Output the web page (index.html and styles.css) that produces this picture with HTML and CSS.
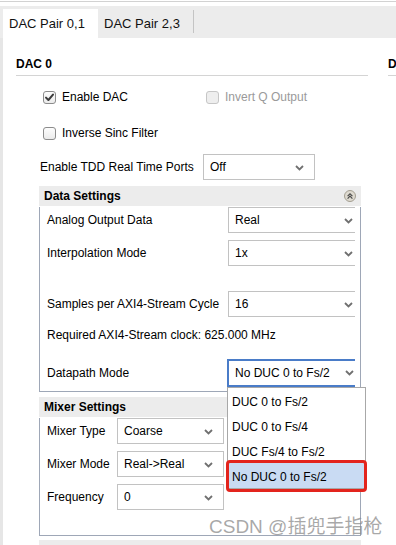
FILE: index.html
```html
<!DOCTYPE html>
<html>
<head>
<meta charset="utf-8">
<link rel="stylesheet" href="styles.css">
</head>
<body>
<div class="app">
  <div class="topline"></div>
  <div class="tabbar">
    <div class="tab active">DAC Pair 0,1</div>
    <div class="tab">DAC Pair 2,3</div>
    <div class="tab-sep"></div>
  </div>
  <div class="content">
    <div class="columns">
      <div class="col">
        <div class="heading">DAC 0</div>

        <div class="check-row r1">
          <div class="check-item wide">
            <span class="cb"><svg width="11" height="11" viewBox="0 0 11 11"><path d="M2 5.6 L4.4 8 L9 2.6" fill="none" stroke="#3c3c3c" stroke-width="2" stroke-linecap="round" stroke-linejoin="round"/></svg></span>
            <span>Enable DAC</span>
          </div>
          <div class="check-item disabled">
            <span class="cb"></span>
            <span>Invert Q Output</span>
          </div>
        </div>

        <div class="check-row r2">
          <div class="check-item">
            <span class="cb"></span>
            <span>Inverse Sinc Filter</span>
          </div>
        </div>

        <div class="tdd-row">
          <span class="tdd-lbl">Enable TDD Real Time Ports</span>
          <div class="select w-off">Off<svg class="chev" width="9" height="6" viewBox="0 0 9 6"><polyline points="1,1 4.5,4.5 8,1" fill="none" stroke="#707070" stroke-width="1.8"/></svg></div>
        </div>

        <div class="panel data">
          <div class="panel-head">
            <span>Data Settings</span>
            <svg class="collapse" width="12" height="12" viewBox="0 0 12 12"><circle cx="6" cy="6" r="5.5" fill="#dedad0" stroke="#a39e91"/><polyline points="3.6,6.2 6,3.8 8.4,6.2" fill="none" stroke="#4a4a4a" stroke-width="1.2"/><polyline points="3.6,8.6 6,6.2 8.4,8.6" fill="none" stroke="#4a4a4a" stroke-width="1.2"/></svg>
          </div>
          <div class="panel-body">
            <div class="frow ra">
              <span class="lbl">Analog Output Data</span>
              <div class="select w-data clip">Real<svg class="chev" width="9" height="6" viewBox="0 0 9 6"><polyline points="1,1 4.5,4.5 8,1" fill="none" stroke="#707070" stroke-width="1.8"/></svg></div>
            </div>
            <div class="frow rb">
              <span class="lbl">Interpolation Mode</span>
              <div class="select w-data clip">1x<svg class="chev" width="9" height="6" viewBox="0 0 9 6"><polyline points="1,1 4.5,4.5 8,1" fill="none" stroke="#707070" stroke-width="1.8"/></svg></div>
            </div>
            <div class="frow rc">
              <span class="lbl">Samples per AXI4-Stream Cycle</span>
              <div class="select w-data clip">16<svg class="chev" width="9" height="6" viewBox="0 0 9 6"><polyline points="1,1 4.5,4.5 8,1" fill="none" stroke="#707070" stroke-width="1.8"/></svg></div>
            </div>
            <div class="info">Required AXI4-Stream clock: 625.000 MHz</div>
            <div class="frow re">
              <span class="lbl">Datapath Mode</span>
              <div class="sel-wrap">
                <div class="select focused">No DUC 0 to Fs/2<svg class="chev" width="9" height="6" viewBox="0 0 9 6"><polyline points="1,1 4.5,4.5 8,1" fill="none" stroke="#707070" stroke-width="1.8"/></svg></div>
                <div class="popup">
                  <div class="opt">DUC 0 to Fs/2</div>
                  <div class="opt">DUC 0 to Fs/4</div>
                  <div class="opt">DUC Fs/4 to Fs/2</div>
                  <div class="opt selected">No DUC 0 to Fs/2</div>
                </div>
              </div>
            </div>
          </div>
        </div>

        <div class="panel mixer">
          <div class="panel-head">
            <span>Mixer Settings</span>
            <svg class="collapse" width="12" height="12" viewBox="0 0 12 12"><circle cx="6" cy="6" r="5.5" fill="#dedad0" stroke="#a39e91"/><polyline points="3.6,6.2 6,3.8 8.4,6.2" fill="none" stroke="#4a4a4a" stroke-width="1.2"/><polyline points="3.6,8.6 6,6.2 8.4,8.6" fill="none" stroke="#4a4a4a" stroke-width="1.2"/></svg>
          </div>
          <div class="panel-body">
            <div class="mrow m1">
              <span class="mlbl">Mixer Type</span>
              <div class="select w-mix">Coarse<svg class="chev" width="9" height="6" viewBox="0 0 9 6"><polyline points="1,1 4.5,4.5 8,1" fill="none" stroke="#707070" stroke-width="1.8"/></svg></div>
            </div>
            <div class="mrow m2">
              <span class="mlbl">Mixer Mode</span>
              <div class="select w-mix">Real-&gt;Real<svg class="chev" width="9" height="6" viewBox="0 0 9 6"><polyline points="1,1 4.5,4.5 8,1" fill="none" stroke="#707070" stroke-width="1.8"/></svg></div>
            </div>
            <div class="mrow m3">
              <span class="mlbl">Frequency</span>
              <div class="select w-mix">0<svg class="chev" width="9" height="6" viewBox="0 0 9 6"><polyline points="1,1 4.5,4.5 8,1" fill="none" stroke="#707070" stroke-width="1.8"/></svg></div>
            </div>
          </div>
        </div>

        <div class="panel next">
          <div class="panel-head"></div>
        </div>
      </div>

      <div class="col">
        <div class="heading">DAC 1</div>
      </div>
    </div>
  </div>
  <div class="watermark">CSDN @插兜手指枪</div>
</div>
</body>
</html>
```

FILE: styles.css
```css
html, body {
  margin: 0;
  padding: 0;
  width: 396px;
  height: 545px;
  overflow: hidden;
  background: #fff;
}

body {
  font-family: "Liberation Sans", Arial, sans-serif;
  font-size: 12px;
  color: #000;
}

.app {
  position: relative;
  width: 396px;
  height: 545px;
  overflow: hidden;
}

.topline {
  height: 1px;
  margin-top: 1px;
  background: #d2d2d2;
}

.tabbar {
  margin-top: 4px;
  height: 32px;
  background: #ececec;
  display: flex;
  align-items: flex-end;
  padding-left: 3px;
}

.tab {
  width: 89px;
  padding-left: 6px;
  height: 29px;
  font-size: 13px;
  display: flex;
  align-items: center;
  flex: none;
  color: #111;
}

.tab.active {
  background: #fff;
}

.tab-sep {
  align-self: flex-start;
  margin-top: 4px;
  width: 1px;
  height: 23px;
  background: #c4c4c4;
}

.content {
  border-left: 3px solid #e6e6e6;
  height: 507px;
}

.columns {
  display: flex;
  gap: 20px;
  padding-left: 13px;
  padding-top: 19px;
}

.col {
  width: 352px;
  flex: none;
}

.heading {
  font-weight: bold;
  line-height: 14px;
  padding-bottom: 4px;
  border-bottom: 1px solid #d4d4d4;
}

.check-row {
  display: flex;
  align-items: center;
  height: 20px;
  padding-left: 27px;
}

.check-row.r1 { margin-top: 11px; }
.check-row.r2 { margin-top: 16px; }

.check-item {
  display: flex;
  align-items: center;
}

.check-item.wide { width: 163px; }

.cb {
  width: 11px;
  height: 11px;
  border: 1px solid #8c8c8c;
  border-radius: 3px;
  margin-right: 6px;
  background: linear-gradient(#fdfdfd, #ebebeb);
  display: flex;
  flex: none;
}

.check-item.disabled { color: #9a9a9a; }
.check-item.disabled .cb {
  border-color: #c6c6c6;
  background: #eeeeee;
}

.tdd-row {
  display: flex;
  align-items: center;
  height: 26px;
  margin-top: 11px;
  padding-left: 24px;
}

.tdd-lbl {
  width: 163px;
  flex: none;
}

.select {
  box-sizing: border-box;
  height: 26px;
  border: 1px solid #c2c2c2;
  background: #fff;
  display: flex;
  align-items: center;
  padding-left: 6px;
  position: relative;
  flex: none;
}

.chev {
  position: absolute;
  right: 10px;
  top: 10px;
}

.w-off { width: 112px; }
.w-data { width: 136px; }
.w-mix { width: 107px; }

.clip { clip-path: inset(0 9px 0 0); }

.panel {
  margin-left: 23px;
  width: 322px;
}

.panel.data { margin-top: 6px; }
.panel.mixer { margin-top: 5px; }
.panel.next { margin-top: 4px; }

.panel-head {
  box-sizing: border-box;
  height: 20px;
  background: #ececec;
  display: flex;
  align-items: center;
  justify-content: space-between;
  padding: 0 5px;
  font-weight: bold;
}

.panel-body {
  border: 1px solid #9ea7b7;
  border-top: none;
  padding-left: 7px;
}

.data .panel-body { padding-bottom: 5px; }
.mixer .panel-body { padding-bottom: 25px; }

.frow {
  display: flex;
  align-items: center;
  height: 26px;
}

.frow.ra { margin-top: 1px; }
.frow.rb { margin-top: 7px; }
.frow.rc { margin-top: 25px; }
.frow.re { margin-top: 17px; }

.lbl {
  width: 181px;
  flex: none;
}

.info {
  margin-top: 10px;
  line-height: 16px;
}

.sel-wrap {
  position: relative;
  flex: none;
  width: 136px;
  height: 26px;
}

.select.focused {
  width: 138px;
  height: 28px;
  margin: -1px;
  border: 2px solid #4a7cc8;
  clip-path: inset(0 10px 0 0);
}

.select.focused .chev {
  right: 9px;
  top: 9px;
}

.popup {
  position: absolute;
  left: -1px;
  top: calc(100% + 1px);
  width: 139px;
  box-sizing: border-box;
  border: 1px solid #a8a8a8;
  background: #fff;
  z-index: 10;
}

.opt {
  box-sizing: border-box;
  height: 25px;
  padding-top: 4px;
  line-height: 21px;
  padding-left: 4px;
  white-space: nowrap;
}

.opt.selected {
  background: #c9dbf3;
  position: relative;
}

.opt.selected::after {
  content: "";
  position: absolute;
  left: -2px;
  right: -2px;
  top: -3px;
  bottom: -4px;
  border: 3px solid #e3241d;
  border-radius: 4px;
}

.mrow {
  display: flex;
  align-items: center;
  height: 26px;
}

.mrow.m1 { margin-top: 1px; }
.mrow.m2 { margin-top: 7px; }
.mrow.m3 { margin-top: 7px; }

.mlbl {
  width: 70px;
  flex: none;
}

.watermark {
  position: absolute;
  left: 209px;
  top: 516px;
  font-family: "Liberation Sans", "Noto Sans CJK SC", sans-serif;
  font-size: 19px;
  line-height: 22px;
  color: rgba(140, 140, 140, 0.75);
  white-space: nowrap;
}
```
